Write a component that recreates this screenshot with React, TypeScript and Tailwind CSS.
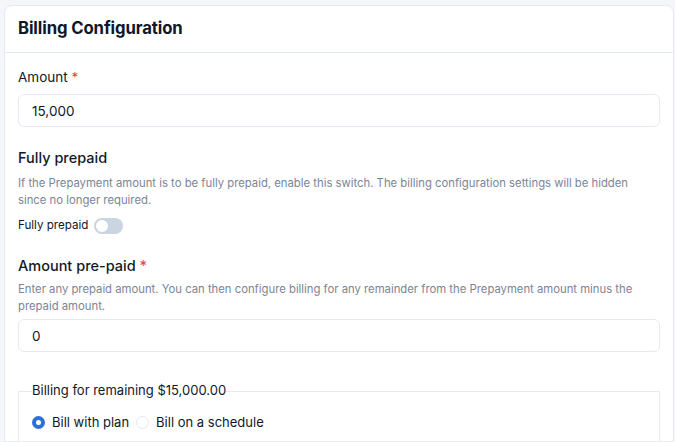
import { useState } from "react";

export default function App() {
  const [fullyPrepaid, setFullyPrepaid] = useState(false);
  const [mode, setMode] = useState("plan");

  return (
    <div
      className="min-h-[442px] bg-[#f4f6f9] pt-[5px] pl-[4px] pr-[1px]"
      style={{ fontFamily: "Inter, 'Noto Sans', sans-serif" }}
    >
      <div className="bg-white border border-[#e6ebf1] rounded-t-lg h-[437px] overflow-hidden">
        {/* Header */}
        <div className="h-[47px] flex items-center px-[13px] border-b border-[#e2e8f0]">
          <h1 className="text-[16.7px] font-bold text-[#0f172a] tracking-[-0.1px]">
            Billing Configuration
          </h1>
        </div>

        <div className="px-[13px]">
          {/* Amount */}
          <div className="pt-[11px]">
            <label className="text-[13.5px] text-[#111827]">
              Amount <span className="text-[#ef4444]">*</span>
            </label>
            <input
              defaultValue="15,000"
              className="mt-[6px] w-full h-[33px] rounded-md border border-[#e5e9f0] px-[13px] text-[13.5px] text-[#111827] outline-none"
            />
          </div>

          {/* Fully prepaid */}
          <div className="pt-[21px]">
            <h2 className="text-[14.5px] font-medium text-[#111827] leading-[20px]">
              Fully prepaid
            </h2>
            <p className="mt-[7px] pr-[20px] text-[11.3px] leading-[17px] text-[#7b8597]">
              If the Prepayment amount is to be fully prepaid, enable this switch. The billing
              configuration settings will be hidden since no longer required.
            </p>
            <div className="mt-[8px] flex items-center gap-[6px]">
              <span className="text-[11.6px] text-[#111827]">Fully prepaid</span>
              <button
                onClick={() => setFullyPrepaid(!fullyPrepaid)}
                className={`w-[29px] h-[16px] rounded-full p-[2px] flex items-center ${
                  fullyPrepaid ? "bg-[#2f6fdb]" : "bg-[#cbd5e1]"
                }`}
              >
                <span
                  className={`w-[12px] h-[12px] rounded-full bg-white ${
                    fullyPrepaid ? "translate-x-[13px]" : ""
                  }`}
                />
              </button>
            </div>
          </div>

          {/* Amount pre-paid */}
          <div className="pt-[19px]">
            <label className="text-[14.5px] font-medium text-[#111827] leading-[20px]">
              Amount pre-paid <span className="text-[#ef4444]">*</span>
            </label>
            <p className="mt-[4px] pr-[20px] text-[11.3px] leading-[17px] text-[#7b8597]">
              Enter any prepaid amount. You can then configure billing for any remainder from
              the Prepayment amount minus the prepaid amount.
            </p>
            <input
              defaultValue="0"
              className="mt-[4px] w-full h-[33px] rounded-md border border-[#e5e9f0] px-[13px] text-[13.5px] text-[#111827] outline-none"
            />
          </div>

          {/* Billing for remaining */}
          <fieldset className="mt-[29px] border border-[#e5e9f0] px-[13px] pb-[14px] pt-[12px]">
            <legend className="text-[13px] text-[#111827] px-0">
              Billing for remaining $15,000.00
            </legend>
            <div className="flex items-center gap-[7px] text-[13px] text-[#111827]">
              <label className="flex items-center gap-[7px]">
                <span
                  onClick={() => setMode("plan")}
                  className={`w-[13px] h-[13px] rounded-full ${
                    mode === "plan"
                      ? "border-[4px] border-[#2f6fdb] bg-white"
                      : "border border-[#e2e8f0] bg-white"
                  }`}
                />
                Bill with plan
              </label>
              <label className="flex items-center gap-[7px]">
                <span
                  onClick={() => setMode("schedule")}
                  className={`w-[13px] h-[13px] rounded-full ${
                    mode === "schedule"
                      ? "border-[4px] border-[#2f6fdb] bg-white"
                      : "border border-[#e2e8f0] bg-white"
                  }`}
                />
                Bill on a schedule
              </label>
            </div>
          </fieldset>
        </div>
      </div>
    </div>
  );
}
